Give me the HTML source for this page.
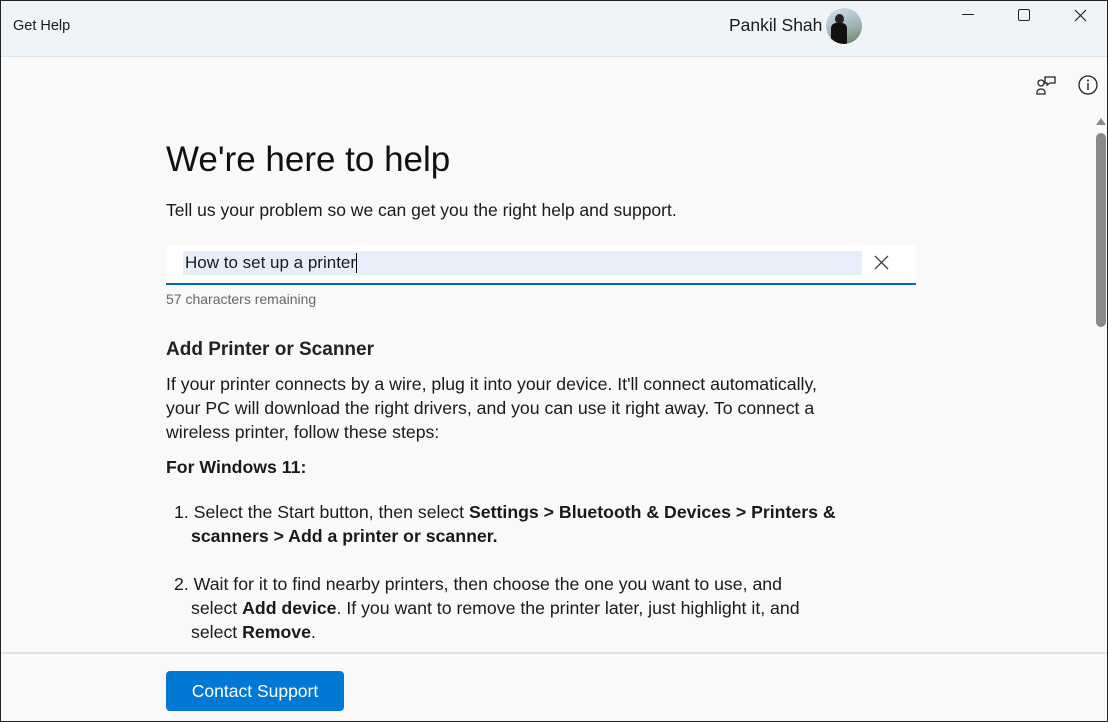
<!DOCTYPE html>
<html><head><style>
*{margin:0;padding:0;box-sizing:border-box}
body{width:1108px;height:722px;overflow:hidden;background:#f9f9f9;font-family:"Liberation Sans",sans-serif;color:#1a1a1a;position:relative}
.frame{position:absolute;inset:0;border:1px solid #222;pointer-events:none;z-index:10}
.title{position:absolute;left:0;top:0;width:1108px;height:57px;background:#eff4f9;border-bottom:1px solid #dde2e7}
.abs{position:absolute;white-space:nowrap}
.p{font-size:17.7px;line-height:24px}
b{font-weight:bold}
</style></head><body>
<div class="title"></div>
<div class="abs" style="left:13px;top:18px;font-size:14.5px">Get Help</div>
<div class="abs" style="left:729px;top:15px;font-size:17.5px">Pankil Shah</div>
<div class="abs" style="left:826px;top:8px;width:36px;height:36px;border-radius:50%;overflow:hidden;background:linear-gradient(160deg,#d6e6ef,#9fb4b8 55%,#6d7d62)">
<div style="position:absolute;left:9px;top:6px;width:9px;height:10px;border-radius:50%;background:#222"></div>
<div style="position:absolute;left:5px;top:15px;width:16px;height:22px;border-radius:5px 5px 0 0;background:#111"></div></div>
<div class="abs" style="left:962px;top:14px;width:12px;height:1px;background:#222"></div>
<div class="abs" style="left:1018px;top:9px;width:12px;height:12px;border:1px solid #222;border-radius:2px"></div>
<svg class="abs" style="left:1074px;top:9px" width="13" height="13"><path d="M1 1L12 12M12 1L1 12" stroke="#222" stroke-width="1.2"/></svg>
<svg class="abs" style="left:1035px;top:74px" width="22" height="22" viewBox="0 0 22 22" fill="none" stroke="#222" stroke-width="1.3"><circle cx="6" cy="9" r="3"/><path d="M2 20v-2a4 3 0 0 1 8 0v2z"/><path d="M10 3h10v6h-5l-3 2v-2h-2z"/></svg>
<svg class="abs" style="left:1077px;top:74px" width="22" height="22" viewBox="0 0 22 22"><circle cx="11" cy="11" r="9" fill="none" stroke="#222" stroke-width="1.3"/><rect x="10.3" y="9" width="1.4" height="7" fill="#222"/><circle cx="11" cy="6.5" r="1" fill="#222"/></svg>
<svg class="abs" style="left:1095px;top:116px" width="12" height="10"><path d="M1 9L6 2L11 9Z" fill="#888"/></svg>
<div class="abs" style="left:1096px;top:133px;width:10px;height:194px;border-radius:5px;background:#8a8a8a"></div>

<div class="abs" style="left:166px;top:140px;font-size:35px;color:#111">We're here to help</div>
<div class="abs" style="left:166px;top:199px;font-size:17.5px;line-height:22px">Tell us your problem so we can get you the right help and support.</div>
<div class="abs" style="left:166px;top:245px;width:750px;height:40px;background:#fff;border-radius:4px 4px 0 0;border-bottom:2px solid #0067c0"></div>
<div class="abs" style="left:183px;top:251px;width:679px;height:24px;background:#e8eef9"></div>
<div class="abs" style="left:185px;top:253px;font-size:17px;line-height:20px">How to set up a printer<span style="display:inline-block;width:1px;height:20px;background:#000;vertical-align:top"></span></div>
<svg class="abs" style="left:874px;top:255px" width="15" height="15"><path d="M1 1L14 14M14 1L1 14" stroke="#444" stroke-width="1.3"/></svg>
<div class="abs" style="left:166px;top:291px;font-size:14px;color:#666">57 characters remaining</div>

<div class="abs" style="left:166px;top:339px;font-size:19px;font-weight:bold;color:#222">Add Printer or Scanner</div>
<div class="abs p" style="left:166px;top:372px">If your printer connects by a wire, plug it into your device. It'll connect automatically,<br>your PC will download the right drivers, and you can use it right away. To connect a<br>wireless printer, follow these steps:</div>
<div class="abs p" style="left:166px;top:455px;font-weight:bold">For Windows 11:</div>
<div class="abs p" style="left:174px;top:500px">1. Select the Start button, then select <b>Settings &gt; Bluetooth &amp; Devices &gt; Printers &amp;</b></div>
<div class="abs p" style="left:191px;top:524px"><b>scanners &gt; Add a printer or scanner.</b></div>
<div class="abs p" style="left:174px;top:572px">2. Wait for it to find nearby printers, then choose the one you want to use, and</div>
<div class="abs p" style="left:191px;top:596px">select <b>Add device</b>. If you want to remove the printer later, just highlight it, and<br>select <b>Remove</b>.</div>

<div class="abs" style="left:0;top:652px;width:1108px;height:70px;background:#f9f9f9;border-top:2px solid #e2e2e2"></div>
<div class="abs" style="left:166px;top:671px;width:178px;height:40px;background:#0078d4;border-radius:4px;color:#fff;font-size:17.5px;text-align:center;line-height:40px">Contact Support</div>
<div class="frame"></div>
</body></html>
